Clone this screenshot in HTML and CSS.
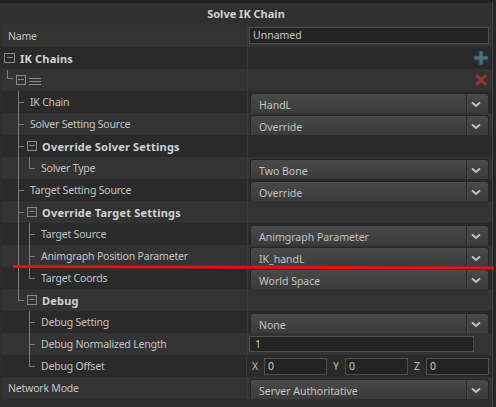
FILE: index.html
```html
<!DOCTYPE html>
<html>
<head>
<meta charset="utf-8">
<link rel="stylesheet" href="styles.css">
</head>
<body>
<div class="window">
  <div class="main">
    <div class="title">Solve IK Chain</div>
    <div class="grid">
      <div class="row light">
        <div class="label"><span class="text">Name</span></div>
        <div class="value"><div class="field wide">Unnamed</div></div>
      </div>
      <div class="row dark">
        <div class="label"><span class="box top"></span><span class="text bold">IK Chains</span></div>
        <div class="value icons">
          <svg class="icon" width="16" height="16" viewBox="0 0 16 16"><path d="M6 1h4v5h5v4h-5v5H6v-5H1V6h5z" fill="#4e6d83" stroke="#2c3f4c" stroke-width="0.8"/></svg>
        </div>
      </div>
      <div class="row light">
        <div class="label"><span class="g elbow up"></span><span class="box"></span><span class="menu"><i></i><i></i><i></i></span></div>
        <div class="value icons">
          <svg class="icon" width="16" height="16" viewBox="0 0 16 16"><path d="M1.5 4 4 1.5 8 5.5 12 1.5 14.5 4 10.5 8 14.5 12 12 14.5 8 10.5 4 14.5 1.5 12 5.5 8z" fill="#8a3a3a" stroke="#4c2424" stroke-width="0.8"/></svg>
        </div>
      </div>
      <div class="row dark">
        <div class="label"><span class="g"></span><span class="g tee"></span><span class="text">IK Chain</span></div>
        <div class="value"><div class="combo"><span class="combo-text">HandL</span><span class="combo-btn"><svg width="10" height="7" viewBox="0 0 10 7"><path d="M1 1.5 5 5 9 1.5" fill="none" stroke="#c2c2c2" stroke-width="2"/></svg></span></div></div>
      </div>
      <div class="row light">
        <div class="label"><span class="g"></span><span class="g tee"></span><span class="text">Solver Setting Source</span></div>
        <div class="value"><div class="combo"><span class="combo-text">Override</span><span class="combo-btn"><svg width="10" height="7" viewBox="0 0 10 7"><path d="M1 1.5 5 5 9 1.5" fill="none" stroke="#c2c2c2" stroke-width="2"/></svg></span></div></div>
      </div>
      <div class="row dark">
        <div class="label"><span class="g"></span><span class="g tee"></span><span class="box"></span><span class="text bold">Override Solver Settings</span></div>
        <div class="value"></div>
      </div>
      <div class="row light">
        <div class="label"><span class="g"></span><span class="g pipe"></span><span class="g elbow"></span><span class="text">Solver Type</span></div>
        <div class="value"><div class="combo"><span class="combo-text">Two Bone</span><span class="combo-btn"><svg width="10" height="7" viewBox="0 0 10 7"><path d="M1 1.5 5 5 9 1.5" fill="none" stroke="#c2c2c2" stroke-width="2"/></svg></span></div></div>
      </div>
      <div class="row dark">
        <div class="label"><span class="g"></span><span class="g tee"></span><span class="text">Target Setting Source</span></div>
        <div class="value"><div class="combo"><span class="combo-text">Override</span><span class="combo-btn"><svg width="10" height="7" viewBox="0 0 10 7"><path d="M1 1.5 5 5 9 1.5" fill="none" stroke="#c2c2c2" stroke-width="2"/></svg></span></div></div>
      </div>
      <div class="row light">
        <div class="label"><span class="g"></span><span class="g tee"></span><span class="box"></span><span class="text bold">Override Target Settings</span></div>
        <div class="value"></div>
      </div>
      <div class="row dark">
        <div class="label"><span class="g"></span><span class="g pipe"></span><span class="g tee"></span><span class="text">Target Source</span></div>
        <div class="value"><div class="combo"><span class="combo-text">Animgraph Parameter</span><span class="combo-btn"><svg width="10" height="7" viewBox="0 0 10 7"><path d="M1 1.5 5 5 9 1.5" fill="none" stroke="#c2c2c2" stroke-width="2"/></svg></span></div></div>
      </div>
      <div class="row light">
        <div class="label"><span class="g"></span><span class="g pipe"></span><span class="g tee"></span><span class="text">Animgraph Position Parameter</span></div>
        <div class="value"><div class="combo"><span class="combo-text">IK_handL</span><span class="combo-btn"><svg width="10" height="7" viewBox="0 0 10 7"><path d="M1 1.5 5 5 9 1.5" fill="none" stroke="#c2c2c2" stroke-width="2"/></svg></span></div></div>
      </div>
      <div class="row dark">
        <div class="label"><span class="g"></span><span class="g pipe"></span><span class="g elbow"></span><span class="text">Target Coords</span></div>
        <div class="value"><div class="combo"><span class="combo-text">World Space</span><span class="combo-btn"><svg width="10" height="7" viewBox="0 0 10 7"><path d="M1 1.5 5 5 9 1.5" fill="none" stroke="#c2c2c2" stroke-width="2"/></svg></span></div></div>
      </div>
      <div class="row light">
        <div class="label"><span class="g"></span><span class="g elbow"></span><span class="box"></span><span class="text bold">Debug</span></div>
        <div class="value"></div>
      </div>
      <div class="row dark">
        <div class="label"><span class="g"></span><span class="g"></span><span class="g tee"></span><span class="text">Debug Setting</span></div>
        <div class="value"><div class="combo"><span class="combo-text">None</span><span class="combo-btn"><svg width="10" height="7" viewBox="0 0 10 7"><path d="M1 1.5 5 5 9 1.5" fill="none" stroke="#c2c2c2" stroke-width="2"/></svg></span></div></div>
      </div>
      <div class="row light">
        <div class="label"><span class="g"></span><span class="g"></span><span class="g tee"></span><span class="text">Debug Normalized Length</span></div>
        <div class="value"><div class="field short">1</div></div>
      </div>
      <div class="row dark">
        <div class="label"><span class="g"></span><span class="g"></span><span class="g elbow"></span><span class="text">Debug Offset</span></div>
        <div class="value">
          <div class="xyz">
            <span class="axis">X</span><span class="field num">0</span>
            <span class="axis">Y</span><span class="field num">0</span>
            <span class="axis">Z</span><span class="field num">0</span>
          </div>
        </div>
      </div>
      <div class="row light">
        <div class="label"><span class="text">Network Mode</span></div>
        <div class="value"><div class="combo"><span class="combo-text">Server Authoritative</span><span class="combo-btn"><svg width="10" height="7" viewBox="0 0 10 7"><path d="M1 1.5 5 5 9 1.5" fill="none" stroke="#c2c2c2" stroke-width="2"/></svg></span></div></div>
      </div>
    </div>
  </div>
  <svg class="annot" width="496" height="407" viewBox="0 0 496 407"><line x1="13" y1="266.5" x2="494" y2="268" stroke="#e81010" stroke-width="3"/></svg>
</div>
</body>
</html>
```

FILE: styles.css
```css
* { box-sizing: border-box; }
html, body { margin: 0; padding: 0; }
body {
  background: #272727;
  font-family: "Noto Sans", "Open Sans", sans-serif;
  font-size: 10.5px;
  color: #c4c4c4;
}
.window {
  position: relative;
  width: 496px;
  height: 407px;
  background: #262626;
  display: flex;
  overflow: hidden;
}
.main {
  width: 493px;
  height: 407px;
  border-top: 3px solid #212121;
  border-right: 1px solid #424242;
  background: #2e2e2e;
  display: flex;
  flex-direction: column;
}
.title {
  height: 22px;
  line-height: 21px;
  text-align: center;
  font-weight: bold;
  font-size: 11px;
  color: #cfcfcf;
  background: #303030;
}
.grid {
  margin-left: 2px;
  width: 490px;
  display: flex;
  flex-direction: column;
}
.row {
  height: 22px;
  display: flex;
}
.row.light { background: #333333; }
.row.dark { background: #2a2a2a; }
.label {
  width: 246px;
  border-right: 1px solid #3c3c3c;
  display: flex;
  align-items: center;
  height: 22px;
}
.text { padding-left: 6px; white-space: nowrap; letter-spacing: -0.2px; }
.box + .text { padding-left: 0; }
.text.bold { font-weight: bold; color: #cfd2d6; font-size: 11px; letter-spacing: 0.2px; }
.g {
  width: 11px;
  height: 22px;
  flex: none;
}
.g.pipe {
  background: linear-gradient(#7d7d7d, #7d7d7d) 5px 0 / 1px 100% no-repeat;
}
.g.tee {
  background:
    linear-gradient(#7d7d7d, #7d7d7d) 5px 0 / 1px 100% no-repeat,
    linear-gradient(#7d7d7d, #7d7d7d) 5px 11px / 6px 1px no-repeat;
}
.g.elbow {
  background:
    linear-gradient(#7d7d7d, #7d7d7d) 5px 0 / 1px 12px no-repeat,
    linear-gradient(#7d7d7d, #7d7d7d) 5px 11px / 6px 1px no-repeat;
}
.g.elbow.up {
  background:
    linear-gradient(#7d7d7d, #7d7d7d) 5px 1px / 1px 9px no-repeat,
    linear-gradient(#7d7d7d, #7d7d7d) 5px 9px / 6px 1px no-repeat;
}
.box {
  flex: none;
  width: 10px;
  height: 10px;
  margin-left: 3px;
  margin-right: 5px;
  margin-top: -1px;
  border: 1px solid #8a8a8a;
  background: linear-gradient(#8a8a8a, #8a8a8a) center / 6px 1px no-repeat;
}
.box.top { margin-left: 2px; width: 11px; }
.menu {
  width: 12px;
  height: 7px;
  margin-left: -2px;
  margin-top: 2px;
  display: flex;
  flex-direction: column;
  justify-content: space-between;
}
.menu i {
  display: block;
  height: 1px;
  background: #8a8a8a;
}
.value {
  flex: 1;
  padding: 0 3px 0 1px;
  height: 22px;
}
.value.icons {
  display: flex;
  justify-content: flex-end;
  align-items: center;
}
.field {
  height: 17px;
  margin-top: 2px;
  background: #232323;
  border: 1px solid #4f4f4f;
  padding-left: 3px;
  line-height: 15px;
  color: #c6c6c6;
  white-space: nowrap;
}
.field.short { width: 225px; margin-top: 3px; height: 16px; line-height: 14px; padding-left: 5px; }
.combo {
  height: 20px;
  margin-top: 2px;
  margin-left: 1px;
  border: 1px solid #252525;
  border-bottom: none;
  border-radius: 3px 3px 0 0;
  background: linear-gradient(#494949, #3b3b3b);
  display: flex;
}
.combo-text {
  flex: 1;
  padding-left: 8px;
  padding-top: 3px;
  line-height: 16px;
  white-space: nowrap;
}
.combo-btn {
  width: 22px;
  border-left: 1px solid #2b2b2b;
  box-shadow: inset 1px 0 0 #4a4a4a;
  display: flex;
  align-items: center;
  justify-content: center;
  padding-right: 3px;
  padding-top: 2px;
}
.xyz {
  display: flex;
  align-items: center;
  height: 22px;
  padding-left: 4px;
}
.axis {
  width: 12px;
  flex: none;
  color: #bdbdbd;
}
.field.num {
  width: 63px;
  flex: none;
  margin-top: 0;
  margin-right: 6px;
  color: #c2cad2;
}
.field.num:last-child { margin-right: 0; }
.annot {
  position: absolute;
  left: 0;
  top: 0;
  pointer-events: none;
}
```
